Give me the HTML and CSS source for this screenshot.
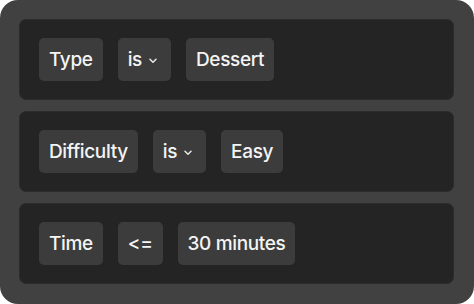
FILE: index.html
```html
<!DOCTYPE html>
<html>
<head>
<meta charset="utf-8">
<link rel="stylesheet" href="styles.css">
</head>
<body>
<div class="panel">
  <div class="row">
    <span class="chip">Type</span>
    <span class="chip op">is<svg class="chev" viewBox="0 0 8 6" width="8" height="6"><path d="M1 1.3l3 3 3-3" fill="none" stroke="currentColor" stroke-width="1.5" stroke-linecap="round" stroke-linejoin="round"/></svg></span>
    <span class="chip">Dessert</span>
  </div>
  <div class="row">
    <span class="chip">Difficulty</span>
    <span class="chip op">is<svg class="chev" viewBox="0 0 8 6" width="8" height="6"><path d="M1 1.3l3 3 3-3" fill="none" stroke="currentColor" stroke-width="1.5" stroke-linecap="round" stroke-linejoin="round"/></svg></span>
    <span class="chip">Easy</span>
  </div>
  <div class="row">
    <span class="chip">Time</span>
    <span class="chip">&lt;=</span>
    <span class="chip">30 minutes</span>
  </div>
</div>
</body>
</html>
```
FILE: styles.css
```css
html, body {
  margin: 0;
  padding: 0;
  background: #ffffff;
}
.panel {
  width: 474px;
  height: 304px;
  box-sizing: border-box;
  background: #414141;
  border-radius: 18px;
  padding: 19px 20px 20px 19px;
  display: flex;
  flex-direction: column;
  gap: 11px;
  font-family: Inter, "Noto Sans", sans-serif;
}
.row {
  flex: 1;
  background: #242424;
  border: 1px solid #2c2c2c;
  border-radius: 7px;
  display: flex;
  align-items: center;
  gap: 15px;
  padding: 0 19px;
}
.chip {
  height: 43px;
  display: inline-flex;
  align-items: center;
  gap: 7px;
  padding: 0 10px;
  background: #3c3c3c;
  border-radius: 5px;
  color: #f4f4f4;
  font-size: 19px;
  font-weight: 500;
  letter-spacing: -0.35px;
}
.op {
  padding-right: 14px;
}
.chev {
  color: #e8e8e8;
  margin-top: 2px;
}
```
